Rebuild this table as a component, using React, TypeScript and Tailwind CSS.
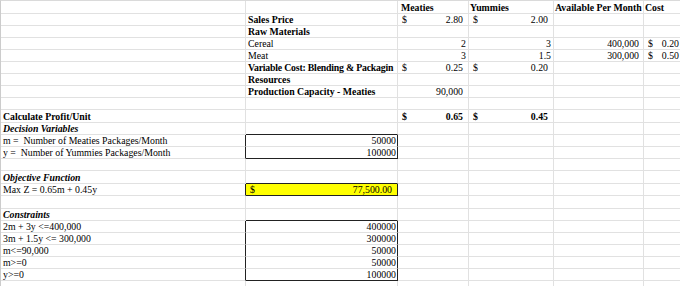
import type { ReactNode } from "react";
import clsx from "clsx";

type Row = {
  h: string;
  a?: ReactNode;
  b?: ReactNode;
  c?: ReactNode;
  d?: ReactNode;
  e?: ReactNode;
  f?: ReactNode;
};

// "$" pinned left, amount pinned right (accounting format)
const Acct = ({ v, bold }: { v: string; bold?: boolean }) => (
  <div className={clsx("flex w-full justify-between pl-[4px] pr-[5px]", bold && "font-bold")}>
    <span>$</span>
    <span>{v}</span>
  </div>
);

const Num = ({ v, pr = "pr-[2px]" }: { v: string; pr?: string }) => (
  <div className={clsx("w-full text-right", pr)}>{v}</div>
);

const Label = ({ v, cls }: { v: string; cls?: string }) => (
  <span className={clsx("pl-[2px]", cls)}>{v}</span>
);

const rows: Row[] = [
  {
    h: "h-[13px]",
    c: <span className="pl-[3px] font-bold">Meaties</span>,
    d: <span className="pl-[1px] font-bold">Yummies</span>,
    e: <span className="pl-[1px] font-bold">Available Per Month</span>,
    f: <span className="pl-[1px] font-bold">Cost</span>,
  },
  { h: "h-[12px]", b: <Label v="Sales Price" cls="font-bold" />, c: <Acct v="2.80" />, d: <Acct v="2.00" /> },
  { h: "h-[12px]", b: <Label v="Raw Materials" cls="font-bold" /> },
  {
    h: "h-[12px]",
    b: <Label v="Cereal" />,
    c: <Num v="2" />,
    d: <Num v="3" />,
    e: <Num v="400,000" pr="pr-[4px]" />,
    f: <Acct v="0.20" />,
  },
  {
    h: "h-[12px]",
    b: <Label v="Meat" />,
    c: <Num v="3" />,
    d: <Num v="1.5" />,
    e: <Num v="300,000" pr="pr-[4px]" />,
    f: <Acct v="0.50" />,
  },
  {
    h: "h-[12px]",
    b: <Label v="Variable Cost: Blending & Packagin" cls="font-bold tracking-[-0.2px]" />,
    c: <Acct v="0.25" />,
    d: <Acct v="0.20" />,
  },
  { h: "h-[12px]", b: <Label v="Resources" cls="font-bold" /> },
  { h: "h-[12px]", b: <Label v="Production Capacity - Meaties" cls="font-bold" />, c: <Num v="90,000" pr="pr-[5px]" /> },
  { h: "h-[12px]" },
  {
    h: "h-[13px]",
    a: <Label v="Calculate Profit/Unit" cls="font-bold" />,
    c: <Acct v="0.65" bold />,
    d: <Acct v="0.45" bold />,
  },
  { h: "h-[12px]", a: <Label v="Decision Variables" cls="font-bold italic" /> },
  { h: "h-[12px]", a: <Label v="m =  Number of Meaties Packages/Month" />, b: <Num v="50000" pr="pr-[1px]" /> },
  { h: "h-[12px]", a: <Label v="y =  Number of Yummies Packages/Month" />, b: <Num v="100000" pr="pr-[1px]" /> },
  { h: "h-[12px]" },
  { h: "h-[13px]", a: <Label v="Objective Function" cls="font-bold italic" /> },
  { h: "h-[12px]", a: <Label v="Max Z = 0.65m + 0.45y" />, b: <Acct v="77,500.00" /> },
  { h: "h-[13px]" },
  { h: "h-[12px]", a: <Label v="Constraints" cls="font-bold italic" /> },
  { h: "h-[12px]", a: <Label v="2m + 3y <=400,000" />, b: <Num v="400000" pr="pr-[1px]" /> },
  { h: "h-[12px]", a: <Label v="3m + 1.5y <= 300,000" />, b: <Num v="300000" pr="pr-[1px]" /> },
  { h: "h-[12px]", a: <Label v="m<=90,000" />, b: <Num v="50000" pr="pr-[1px]" /> },
  { h: "h-[12px]", a: <Label v="m>=0" />, b: <Num v="50000" pr="pr-[1px]" /> },
  { h: "h-[12px]", a: <Label v="y>=0" />, b: <Num v="100000" pr="pr-[1px]" /> },
  { h: "h-[12px]" },
];

// outlined ranges in column B
const boxes = [
  [11, 12],
  [15, 15],
  [18, 22],
];
const boxOf = (i: number) => boxes.findIndex(([s, e]) => i >= s && i <= e);

const cell = "flex items-end overflow-hidden whitespace-pre border-b border-r border-[#e1e1e1] shrink-0";

export default function App() {
  return (
    <div className="w-[680px] h-[286px] overflow-hidden bg-white">
      <div className="w-[685px] border-t border-l border-t-[#dadada] border-l-[#cccccc] font-['Liberation_Serif',serif] text-[9.8px] leading-[11px] text-black">
        {rows.map((r, i) => {
          const box = boxOf(i);
          const next = boxOf(i + 1);
          const darkBottom = (box !== -1 && next !== box) || (next !== -1 && next !== box);
          return (
            <div key={i} className={clsx("flex", r.h)}>
              <div className={clsx(cell, "w-[245px]", box !== -1 && "border-r-[#222222]")}>{r.a}</div>
              <div
                className={clsx(
                  cell,
                  "w-[152px]",
                  box !== -1 && "border-r-[#222222]",
                  darkBottom && "border-b-[#222222]",
                  box === 1 && "bg-[#ffff00]"
                )}
              >
                {r.b}
              </div>
              <div className={clsx(cell, "w-[71px]")}>{r.c}</div>
              <div className={clsx(cell, "w-[85px]")}>{r.d}</div>
              <div className={clsx(cell, "w-[90px]")}>{r.e}</div>
              <div className={clsx(cell, "w-[41px]")}>{r.f}</div>
            </div>
          );
        })}
      </div>
    </div>
  );
}
